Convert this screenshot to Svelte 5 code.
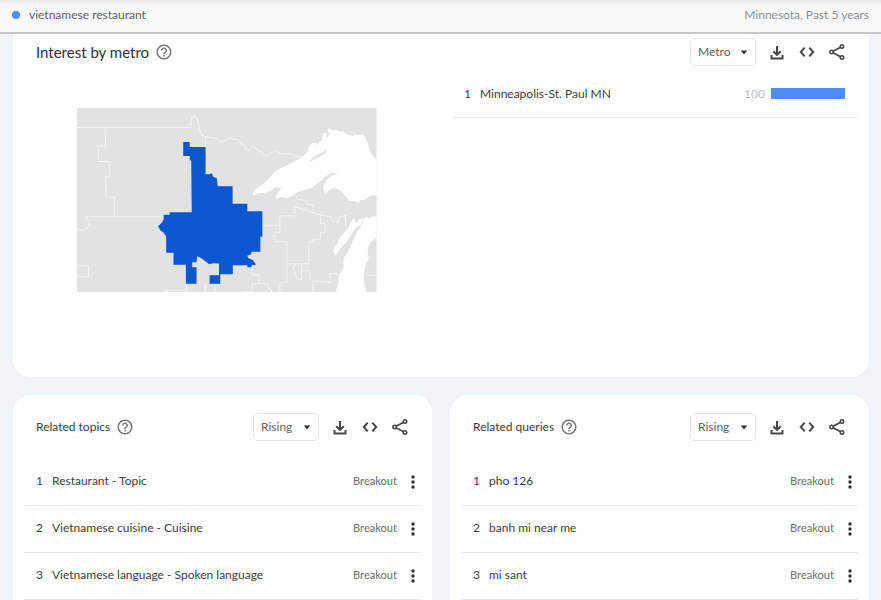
<script lang="ts">
    type Row = { label: string; value: string }
    type Panel = { id: string; title: string; rows: Row[] }

    const term = 'vietnamese restaurant'
    const scope = 'Minnesota, Past 5 years'

    const metros = [
        { name: 'Minneapolis-St. Paul MN', score: 100 },
    ]

    const panels: Panel[] = [
        {
            id: 'topics',
            title: 'Related topics',
            rows: [
                { label: 'Restaurant - Topic', value: 'Breakout' },
                { label: 'Vietnamese cuisine - Cuisine', value: 'Breakout' },
                { label: 'Vietnamese language - Spoken language', value: 'Breakout' },
            ],
        },
        {
            id: 'queries',
            title: 'Related queries',
            rows: [
                { label: 'pho 126', value: 'Breakout' },
                { label: 'banh mi near me', value: 'Breakout' },
                { label: 'mi sant', value: 'Breakout' },
            ],
        },
    ]

    // region outlines, thin light lines over the grey land
    const BORDERS = [
        'M77 127.5H191V117L194 116.5L197 118L199 127L201 135L205 136.5L213 138L217 138.5L219 141.5L223 141L228 138.5L237 139.5L241 143L244 145L246 150L249 150L251 147L254 147L257 150L261 152L263 155L268 155L272 152L276 150L280 154H292L297 157L303 156',
        'M205.3 136.5V147',
        'M105 127.5L105.5 146H98.5V161.5H109L110 176.5H105.5L106 197H114.5V216.5',
        'M163 216.5H86L88 221L89.5 224L86 229.5H77',
        'M77 265.5H88.5V277H84L82 276L80 277L77 275',
        'M186 283.5V290.5H164V292.5M205 283.5V292.5M214.5 283.5V292.5',
        'M242 291.5H252V283.5H268V288L271 289V292.5M252 266V274.5H259V283.5',
        'M262 225H279.5M294.5 206.5V215.5H279.5V232H274.5V241.5H286.5V282.5H279.5V292.5',
        'M294.5 206.5L305 210L312 212L320 214.5V223H324.5V232H320V239H313V241.5H308.5V263.5H286.5',
        'M320 214.5L330 216.5L332 221L336 222.5L339 220V216.5L345 215.5V226',
        'M295 263.5L293 268L294.5 273L297 279.5H301V263.5M301 270.5H309.5V279.5',
        'M312.5 292.5V280.5L329.5 282V273.5H338M366 275H376',
        'M295 195L297 199L305 200L307 204L313 205V211',
    ]

    const WATER = [
        'M252 193.5L255 189L262 184.5L265 181.5L275 171.5L281 168L287 165L297 160L303 156L306 153L308 150V146.5L312 143H317L315 147L319 142L322 140L322 134L326 132.5V137L323 141L330 134L327.5 132V128L332 130.5L336 130L340 132L343 131.5L347 135L352 136L354 134L357 135L363 134.5L366 140L368 146L370 153L373 157L376 159V195L370 195.5L363 200L360 199.5L358 202.5L354 201L348 200.5L346 197L343 194L340 190L334 187.5L330 189L325 193L323 190V185L327 179L332 175L338 173.5L332 172.5L325 176L320 181L312 187L305 189.5L297 192L291 196L287 198L281 197L276 198.5L275 196.5L278 191L281 188L275 187L272 190L264 192.5L258 193L254 195.5Z',
        'M376 216.5L372 216L369 218L365 217L362 223L358 230L355 235L351 244L347 252L343 258V267L341 271L338 275V282L335 292.5H366L363 281L364 268L368 258L367 248L370 242L376 238Z',
        'M335 255.5L332.5 251L337 243L339 238L343 233L348 227L352 219L354 218L354.5 223L359 218.5L364 218.5L360 225L354 229L350 236L346 242L340 248Z',
    ]

    const METRO = 'M183 142H189.5V147H205.3V174H209L211.5 173L213 176.5L216.5 178L217.5 186H232.3V203.5H247V211H262V236.5H260V251.5H251V254L247 255.5L248 258L252 259.5L255 263V265L251.5 264.5L251 267H247V265H232.5V274H220V283.5H209.3V275H218.7V263.3L213 263L209 264L205 261L202 258.5L197 256L196.3 262H192V267H196.3V283.5H185.7V264.5H173.3V252.5H166V236L163 232L160 230L158 226L162 222L163.5 219V214.5H169.5V212H191.5L191 160.5H189.5V156H183Z'
</script>

{#snippet title(text: string)}
    <h2>{text}</h2>
    <button class="icon help" aria-label="Help">
        <svg viewBox="0 0 24 24">
            <path d="M11 18h2v-2h-2v2zm1-16C6.48 2 2 6.48 2 12s4.48 10 10 10 10-4.48 10-10S17.52 2 12 2zm0 18c-4.41 0-8-3.59-8-8s3.59-8 8-8 8 3.59 8 8-3.59 8-8 8zm0-14c-2.21 0-4 1.79-4 4h2c0-1.1.9-2 2-2s2 .9 2 2c0 2-3 1.75-3 5h2c0-2.25 3-2.5 3-5 0-2.21-1.79-4-4-4z" />
        </svg>
    </button>
{/snippet}

{#snippet tools(options: string[], name: string)}
    <div class="tools">
        <label class="picker">
            <select aria-label={name}>
                {#each options as option}
                    <option>{option}</option>
                {/each}
            </select>
            <svg viewBox="0 0 8 5"><path d="M0.8 0.5h6.4L4 4.5z" /></svg>
        </label>
        <button class="icon" aria-label="Download">
            <svg viewBox="0 0 20 20">
                <path class="line" d="M10 4v9M6.3 9.200L10 12.900L13.700 9.200M4.500 13v3.500h11V13" />
            </svg>
        </button>
        <button class="icon" aria-label="Embed">
            <svg viewBox="0 0 20 20">
                <path class="line" d="M7.7 5.7L3.8 10l3.9 4.300M12.3 5.700l3.900 4.300-3.900 4.300" />
            </svg>
        </button>
        <button class="icon" aria-label="Share">
            <svg viewBox="0 0 20 20">
                <path class="line thin" d="M6 9.200L13.600 5.300M6 10.800l7.600 3.900" />
                <circle class="line thin" cx="4.600" cy="10" r="1.700" />
                <circle class="line thin" cx="15" cy="4.500" r="1.700" />
                <circle class="line thin" cx="15" cy="15.500" r="1.700" />
            </svg>
        </button>
    </div>
{/snippet}

<header>
    <span class="dot"></span>
    <span class="term">{term}</span>
    <span class="scope">{scope}</span>
</header>

<main>
    <section class="card metro">
        <div class="head">
            {@render title('Interest by metro')}
            {@render tools(['Metro', 'City'], 'Region level')}
        </div>
        <div class="split">
            <svg class="map" viewBox="77 108 299 184" role="img" aria-label="Map of interest by metro">
                <rect class="land" x="77" y="108" width="299" height="184" />
                {#each BORDERS as d}
                    <path class="border" {d} />
                {/each}
                {#each WATER as d}
                    <path class="water" {d} />
                {/each}
                <path class="land" d="M309.5 162L310 159L316 155.5L322 152L328 149.5L324 154L316 158.5Z" />
                <path class="active" d={METRO} />
            </svg>
            <ol class="rows">
                {#each metros as metro, i}
                    <li>
                        <span class="rank">{i + 1}</span>
                        <span class="label">{metro.name}</span>
                        <span class="score">{metro.score}</span>
                        <span class="track"><span class="bar" style="width: {metro.score}%"></span></span>
                    </li>
                {/each}
            </ol>
        </div>
    </section>

    <div class="pair">
        {#each panels as panel (panel.id)}
            <section class="card related">
                <div class="head">
                    {@render title(panel.title)}
                    {@render tools(['Rising', 'Top'], panel.title)}
                </div>
                <ol class="rows">
                    {#each panel.rows as row, i}
                        <li>
                            <span class="rank">{i + 1}</span>
                            <span class="label">{row.label}</span>
                            <span class="value">{row.value}</span>
                            <button class="more" aria-label="More options">
                                <svg viewBox="0 0 4 14">
                                    <circle cx="2" cy="2" r="1.7" />
                                    <circle cx="2" cy="7" r="1.7" />
                                    <circle cx="2" cy="12" r="1.7" />
                                </svg>
                            </button>
                        </li>
                    {/each}
                </ol>
            </section>
        {/each}
    </div>
</main>

<style>
    :global(body) {
        margin: 0;
        background: #f0f4f9;
        font-family: Lato, "Open Sans", sans-serif;
        font-size: 12px;
        line-height: 16px;
        color: #3c4043;
    }

    header {
        display: flex;
        align-items: center;
        height: 30px;
        padding: 0 12px 2px;
        background: linear-gradient(#e8e8e8, #f9f9f9 5px);
        border-bottom: 2px solid #c4c6c8;
    }
    .dot {
        width: 8px;
        height: 8px;
        margin-right: 9px;
        border-radius: 50%;
        background: #4c8df6;
    }
    .term { color: #5f6368; }
    .scope {
        margin-left: auto;
        color: #8f9194;
    }

    main { padding: 0 12px 0 13px; }
    .card { background: #fff; }
    .card.metro { border-radius: 0 0 18px 18px; }
    .card.related { border-radius: 18px 18px 0 0; }

    .head {
        display: flex;
        align-items: center;
        padding: 0 22px 0 23px;
    }
    .metro .head { height: 36px; }
    .related .head { height: 64px; }
    h2 {
        margin: 0;
        font-size: 12px;
        font-weight: 400;
    }
    .metro h2 {
        font-size: 15px;
        color: #303134;
    }

    button {
        padding: 0;
        border: 0;
        background: none;
    }
    .icon {
        width: 20px;
        height: 20px;
    }
    .icon svg, .more svg { display: block; }
    .help {
        width: 18px;
        height: 18px;
        margin-left: 6px;
    }
    .help svg { fill: #757779; }
    .line {
        fill: none;
        stroke: #444746;
        stroke-width: 2;
    }
    .line.thin { stroke-width: 1.6; }

    .tools {
        display: flex;
        align-items: center;
        gap: 10px;
        margin-left: auto;
    }
    .picker {
        display: grid;
        align-items: center;
        margin-right: 1px;
    }
    .picker > * { grid-area: 1 / 1; }
    .picker svg {
        width: 8px;
        justify-self: end;
        margin-right: 8px;
        fill: #303134;
        pointer-events: none;
    }
    select {
        appearance: none;
        width: 66px;
        height: 28px;
        padding: 0 7px;
        border: 1px solid #e4e5e7;
        border-radius: 5px;
        background: #fff;
        font: inherit;
        color: #5f6368;
    }

    .split {
        display: grid;
        grid-template-columns: 1fr 1fr;
        align-items: start;
    }
    .map {
        width: 70%;
        margin: 38px auto 85px;
    }
    .land { fill: #e2e2e2; }
    .water { fill: #fff; }
    .active { fill: #0b57d0; }
    .border {
        fill: none;
        stroke: #f4f4f4;
        stroke-width: 1;
    }

    .rows {
        margin: 0 11px;
        padding: 0;
        list-style: none;
    }
    li {
        display: flex;
        align-items: center;
        height: 46px;
        padding: 0 6px 0 12px;
        border-bottom: 1px solid #e8e9eb;
    }
    .split li {
        height: 47px;
        padding-right: 13px;
    }
    .rank { width: 16px; }
    .label { flex: 1; }
    .related .label, .related .rank { padding-bottom: 2px; }
    .value {
        margin-right: 14px;
        font-size: 11px;
        font-weight: 500;
        color: #757779;
    }
    .related .value { padding-bottom: 2px; }
    .more { width: 4px; }
    .more svg { fill: #303134; }
    .score {
        margin-right: 6px;
        color: #b8babc;
    }
    .track { width: 74px; }
    .bar {
        display: block;
        height: 11px;
        background: #4c8df6;
    }

    .pair {
        display: grid;
        grid-template-columns: 1fr 1fr;
        gap: 18px;
        margin-top: 18px;
    }
</style>
